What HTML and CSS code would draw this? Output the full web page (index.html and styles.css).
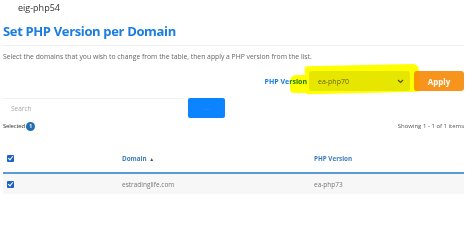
FILE: index.html
```html
<!DOCTYPE html>
<html>
<head>
<meta charset="utf-8">
<link rel="stylesheet" href="styles.css">
</head>
<body>
<div class="page">
  <div class="account">eig-php54</div>
  <h1 class="title">Set PHP Version per Domain</h1>
  <p class="desc">Select the domains that you wish to change from the table, then apply a PHP version from the list.</p>
  <div class="apply-row">
    <span class="label">PHP Version</span>
    <div class="select-wrap">
      <div class="select">
        <span>ea-php70</span>
        <svg class="chev" width="7" height="5" viewBox="0 0 7 5"><path d="M1 1 L3.5 3.5 L6 1" fill="none" stroke="#555" stroke-width="1.2"/></svg>
      </div>
      <div class="highlight"></div>
      <div class="highlight-tail"></div>
    </div>
    <button class="apply">Apply</button>
  </div>
  <div class="search-row">
    <div class="search">Search</div>
    <button class="go">...</button>
  </div>
  <div class="status-row">
    <div class="selected">Selected <span class="badge">1</span></div>
    <div class="showing">Showing 1 - 1 of 1 items</div>
  </div>
  <div class="table">
    <div class="thead">
      <div class="c1"><span class="cb"></span></div>
      <div class="c2">Domain <span class="arrow">▲</span></div>
      <div class="c3">PHP Version</div>
    </div>
    <div class="trow">
      <div class="c1"><span class="cb"></span></div>
      <div class="c2">estradinglife.com</div>
      <div class="c3">ea-php73</div>
    </div>
  </div>
</div>
</body>
</html>
```
FILE: styles.css
```css
* { box-sizing: border-box; }
body {
  margin: 0;
  background: #fff;
  font-family: "Open Sans", "Noto Sans", sans-serif;
  color: #555;
  width: 474px;
  height: 207px;
  overflow: hidden;
}
.page {
  padding: 0 10px 0 3px;
}
.account {
  padding: 1px 0 0 15px;
  font-size: 9px;
  line-height: 14px;
  color: #333;
}
.title {
  margin: 7px 0 0 0;
  font-size: 13px;
  letter-spacing: -0.35px;
  line-height: 18px;
  font-weight: 700;
  color: #1a7de0;
  padding-bottom: 5px;
  border-bottom: 1px solid #eee;
}
.desc {
  margin: 6px 0 0 0;
  font-size: 6.8px;
  line-height: 10px;
  color: #666;
}
.apply-row {
  display: flex;
  justify-content: flex-end;
  align-items: center;
  margin-top: 9px;
  height: 20px;
}
.label {
  font-size: 7px;
  font-weight: 700;
  color: #1a7de0;
  margin-right: 2px;
}
.select-wrap {
  position: relative;
  width: 101px;
  height: 20px;
}
.select {
  height: 20px;
  background: #e6e630;
  border-radius: 3px;
  display: flex;
  align-items: center;
  justify-content: space-between;
  padding: 0 6px 0 9px;
  font-size: 7px;
  color: #666;
}
.highlight {
  position: absolute;
  left: -4px;
  top: -6px;
  width: 114px;
  height: 28px;
  background: #ffff00;
  mix-blend-mode: multiply;
  border-radius: 2px 6px 2px 3px;
  transform: rotate(-1.2deg);
  pointer-events: none;
}
.highlight-tail {
  position: absolute;
  left: -19px;
  top: 4px;
  width: 20px;
  height: 18px;
  background: #ffff00;
  mix-blend-mode: multiply;
  border-radius: 6px 0 0 4px;
  pointer-events: none;
}
.chev { display: block; }
.apply {
  margin-left: 4px;
  width: 50px;
  height: 20px;
  border: 0;
  border-radius: 3px;
  background: #f7941d;
  color: #fff;
  font-family: inherit;
  font-size: 8px;
  font-weight: 700;
}
.search-row {
  display: flex;
  margin-top: 7px;
  height: 20px;
}
.search {
  width: 182px;
  border-top: 1px solid #f0f0f0;
  font-size: 6.5px;
  color: #aaa;
  padding: 5px 0 0 8px;
}
.go {
  margin-left: 3px;
  width: 37px;
  height: 20px;
  border: 0;
  border-radius: 2px;
  background: #0d84ff;
  color: #6cb0ff;
  font-size: 6px;
  padding: 0;
}
.status-row {
  display: flex;
  justify-content: space-between;
  align-items: center;
  margin-top: 3px;
  height: 10px;
  font-size: 6px;
  color: #333;
}
.selected { display: flex; align-items: center; letter-spacing: -0.2px; }
.badge {
  display: inline-flex;
  align-items: center;
  justify-content: center;
  width: 9px;
  height: 9px;
  border-radius: 50%;
  background: #1f6fb5;
  color: #fff;
  font-size: 5px;
  font-weight: 700;
  margin-left: 1px;
}
.showing { color: #555; }
.table {
  margin-top: 13px;
}
.thead, .trow {
  display: flex;
  align-items: center;
}
.thead {
  height: 30px;
  border-bottom: 2px solid #5b9ad8;
  font-weight: 700;
  color: #3b7cc0;
  font-size: 6.3px;
}
.trow {
  height: 20px;
  background: #f7f7f7;
  font-size: 6.5px;
  color: #777;
}
.c1 { width: 119px; padding-left: 4px; display: flex; align-items: center; }
.c2 { width: 192px; }
.c3 { flex: 1; }
.arrow { font-size: 5px; color: #555; margin-left: 1px; }
.cb {
  display: inline-block;
  width: 7px;
  height: 7px;
  background: #1d62c8;
  border-radius: 1px;
  position: relative;
}
.cb::after {
  content: "";
  position: absolute;
  left: 2px;
  top: 0.5px;
  width: 2px;
  height: 4px;
  border: solid #fff;
  border-width: 0 1px 1px 0;
  transform: rotate(40deg);
}
```
